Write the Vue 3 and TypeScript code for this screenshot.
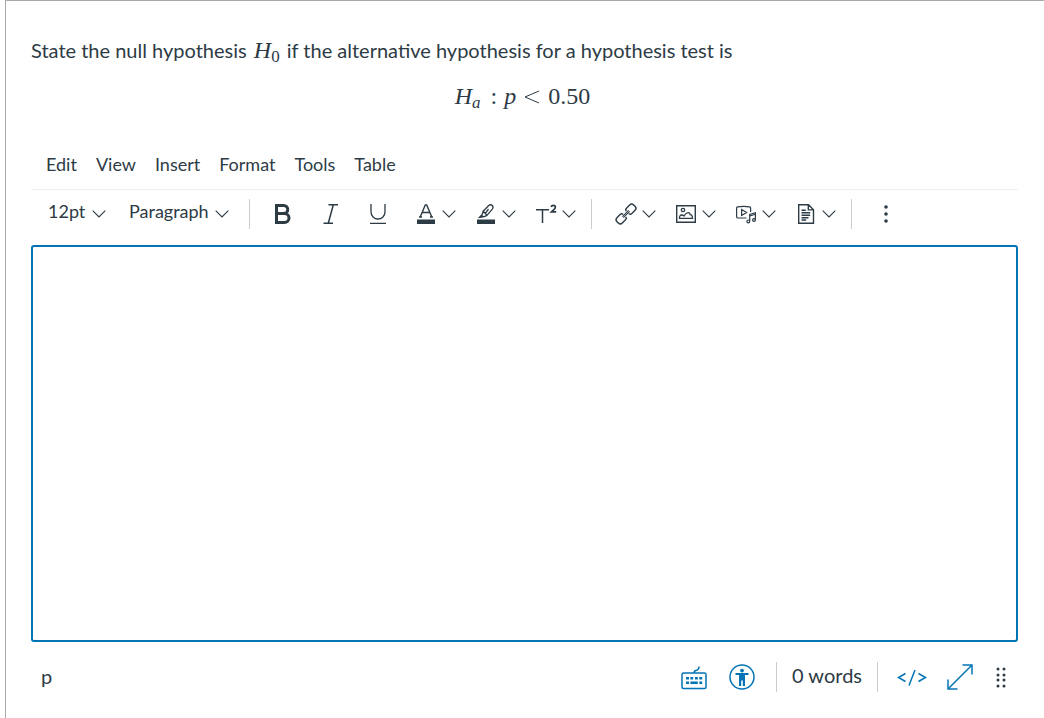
<script setup lang="ts">
import { ref } from 'vue'

const menus: string[] = ['Edit', 'View', 'Insert', 'Format', 'Tools', 'Table']
const fontSize = ref('12pt')
const block = ref('Paragraph')
const answer = ref('')
</script>

<template>
  <main class="question">
    <p class="prompt">
      State the null hypothesis
      <span class="math"><i>H</i><sub>0</sub></span>
      if the alternative hypothesis for a hypothesis test is
    </p>
    <p class="formula math">
      <span><i>H</i><sub><i>a</i></sub></span>
      <span class="colon">:</span>
      <i>p</i>
      <svg class="less" width="16" height="14" viewBox="0 0 16 14"><path d="M15 1L1 7l14 6" /></svg>
      <span>0.50</span>
    </p>

    <nav class="menubar" aria-label="Editor menu">
      <button v-for="m in menus" :key="m" type="button">{{ m }}</button>
    </nav>

    <div class="toolbar" role="toolbar" aria-label="Formatting">
      <label class="picker size">
        <select v-model="fontSize" aria-label="Font size">
          <option>12pt</option>
          <option>14pt</option>
        </select>
        <svg class="chev" width="14" height="8" viewBox="0 0 14 8"><path d="M.7.7L7 7 13.300.7" /></svg>
      </label>
      <label class="picker block">
        <select v-model="block" aria-label="Block style">
          <option>Paragraph</option>
          <option>Heading 2</option>
        </select>
        <svg class="chev" width="14" height="8" viewBox="0 0 14 8"><path d="M.7.7L7 7 13.300.7" /></svg>
      </label>

      <span class="rule"></span>
      <div class="group">
        <button class="single" type="button" aria-label="Bold">
          <svg width="20" height="20" viewBox="0 0 20 20">
            <path d="M3.500 1.500h7.200a4 4 0 0 1 0 8H3.500zM3.500 9.500h8a4.400 4.400 0 0 1 0 9h-8z" stroke-width="3" />
          </svg>
        </button>
        <button class="single" type="button" aria-label="Italic">
          <svg width="20" height="20" viewBox="0 0 20 20"><path d="M7.500.7H17M2.500 19.300H12M12.300.7L7.300 19.300" stroke-width="1.500" /></svg>
        </button>
        <button class="single" type="button" aria-label="Underline">
          <svg width="20" height="20" viewBox="0 0 20 20"><path d="M2 0v8a7 7 0 0 0 14 0V0M1 19.300h16" stroke-width="1.300" /></svg>
        </button>
      </div>
      <div class="group">
        <button class="split" type="button" aria-label="Text color">
          <svg width="20" height="20" viewBox="0 0 20 20">
            <path d="M4.200 13L9.300.9h1.400L15.800 13M6.300 8.500h7.400M3 13h3M14 13h3" stroke-width="1.400" />
            <path class="solid" d="M1 15.500h18v4.500H1z" />
          </svg>
          <svg class="chev" width="14" height="8" viewBox="0 0 14 8"><path d="M.7.7L7 7 13.300.7" /></svg>
        </button>
        <button class="split" type="button" aria-label="Highlight color">
          <svg width="20" height="20" viewBox="0 0 20 20">
            <path d="M7.200 7.300L12.700 1.500q2-1.600 3.600 0 1.500 1.700 0 3.600L11 11.300 7.200 7.300 6 10.800 3.600 13.200 8.400 12.500 11 11.300M12.500 5L9.300 9.300" stroke-width="1.300" />
            <path class="solid" d="M1 15.500h18v4.500H1zM3 13.700l2.800-3 2.200 2z" />
          </svg>
          <svg class="chev" width="14" height="8" viewBox="0 0 14 8"><path d="M.7.7L7 7 13.300.7" /></svg>
        </button>
        <button class="split" type="button" aria-label="Superscript">
          <svg width="20" height="20" viewBox="0 0 20 20">
            <path d="M0 5.700h13M6.500 5.700V19" stroke-width="1.500" />
            <path d="M15.200 3q.3-1.600 2.200-1.600 2 0 2 1.700 0 1.300-1.500 2.500L15.500 7.800h4.700" stroke-width="1.700" />
          </svg>
          <svg class="chev" width="14" height="8" viewBox="0 0 14 8"><path d="M.7.7L7 7 13.300.7" /></svg>
        </button>
      </div>

      <span class="rule"></span>
      <div class="group">
        <button class="split" type="button" aria-label="Links">
          <svg width="20" height="20" viewBox="0 0 20 20" stroke-width="1.400">
            <g transform="rotate(-45 10 10)">
              <path d="M7.600 8.300V8Q7.600 6.200 5.500 6.200H1Q-1.800 6.200-1.800 9v2Q-1.800 13.800 1 13.800h4.500q2.100 0 2.100-1.800v-.3" />
              <path d="M12.400 8.300V8q0-1.800 2.100-1.800H19q2.800 0 2.800 2.800v2q0 2.800-2.800 2.800h-4.500q-2.100 0-2.100-1.800v-.3" />
              <path d="M5.500 9.300h9M5.500 10.700h9" stroke-width="1" />
            </g>
          </svg>
          <svg class="chev" width="14" height="8" viewBox="0 0 14 8"><path d="M.7.7L7 7 13.300.7" /></svg>
        </button>
        <button class="split" type="button" aria-label="Images">
          <svg width="20" height="20" viewBox="0 0 20 20">
            <path d="M.7 1.700h18.600v16.600H.7z" stroke-width="1.400" />
            <circle cx="7" cy="6" r="1.700" stroke-width="1.300" />
            <path d="M3.500 14.300q-.2-3.300 2.300-3.300 1.500 0 2.200 1 2.300-3.700 4.500-3.300 1.500.3 1.700 2 2-.3 2.300 3.600z" stroke-width="1.300" />
          </svg>
          <svg class="chev" width="14" height="8" viewBox="0 0 14 8"><path d="M.7.7L7 7 13.300.7" /></svg>
        </button>
        <button class="split" type="button" aria-label="Record or upload media">
          <svg width="20" height="20" viewBox="0 0 20 20" stroke-width="1.200">
            <path d="M10.500 14H1.600Q.6 13.900.6 12.500V4q0-1 1-1.200 6-1 12 0 1 .2 1 1.200v4M5.600 5.500v6l5-3z" />
            <path d="M13.700 17V10.500l5.700-1.800v7M13.700 12l5.700-1.800" />
            <circle cx="12.300" cy="17.400" r="1.400" />
            <circle cx="18" cy="16" r="1.400" />
          </svg>
          <svg class="chev" width="14" height="8" viewBox="0 0 14 8"><path d="M.7.7L7 7 13.300.7" /></svg>
        </button>
        <button class="split" type="button" aria-label="Documents">
          <svg width="20" height="20" viewBox="0 0 20 20">
            <path d="M2.700.7h9.800l5 5v13.600H2.700zM12.300.7v5.200h5.200M5.500 6.200h4.300M5.500 8.800h8.700M5.500 11.300h8.700M5.500 13.700h7M5.500 16h4.700" stroke-width="1.400" />
          </svg>
          <svg class="chev" width="14" height="8" viewBox="0 0 14 8"><path d="M.7.7L7 7 13.300.7" /></svg>
        </button>
      </div>

      <span class="rule"></span>
      <button class="more" type="button" aria-label="More">
        <svg width="6" height="20" viewBox="0 0 6 20">
          <g class="solid"><circle cx="3" cy="3" r="1.800" /><circle cx="3" cy="10" r="1.800" /><circle cx="3" cy="17" r="1.800" /></g>
        </svg>
      </button>
    </div>

    <textarea v-model="answer" class="editor" aria-label="Rich content editor"></textarea>

    <footer class="status">
      <span class="path">p</span>
      <button class="blue" type="button" aria-label="Keyboard shortcuts">
        <svg width="26" height="26" viewBox="0 0 26 26">
          <rect x="1" y="9" width="24" height="15.500" rx="1.500" stroke-width="1.500" />
          <path d="M13 9q.2-2.500 2.500-2.800 2.500-.4 2.500-3.700" stroke-width="1.500" />
          <path class="solid" d="M5 13h3v2.600H5zM9.400 13h2.800v2.600H9.400zM14 13h2.800v2.600H14zM18.300 13h2.900v2.600h-2.900zM5 17.500h3v2.600H5zM9.400 17.500h7.400v2.600H9.400zM18.300 17.500h2.900v2.600h-2.900z" />
        </svg>
      </button>
      <button class="blue" type="button" aria-label="Accessibility checker">
        <svg width="26" height="26" viewBox="0 0 26 26">
          <circle cx="13" cy="13" r="12" stroke-width="1.500" />
          <circle class="solid" cx="13" cy="6.600" r="1.900" />
          <path class="solid" d="M6.500 9h13v2H16v11h-2.200v-5.500h-1.600V22H10V11H6.500z" />
        </svg>
      </button>
      <span class="rule"></span>
      <button class="words" type="button">0 words</button>
      <span class="rule"></span>
      <button class="blue" type="button" aria-label="HTML editor">
        <svg width="30" height="26" viewBox="0 0 30 26"><path d="M8.500 9.500l-7 4 7 4M21.500 9.500l7 4-7 4M18 6L12 21.500" stroke-width="1.500" /></svg>
      </button>
      <button class="blue" type="button" aria-label="Fullscreen">
        <svg width="26" height="26" viewBox="0 0 26 26"><path d="M1 25L25 1M15.500 1H25v9.500M1 15.500V25h9.500" stroke-width="1.500" /></svg>
      </button>
      <button class="grip" type="button" aria-label="Resize editor">
        <svg width="10" height="22" viewBox="0 0 10 22">
          <g class="solid">
            <template v-for="y in [3, 9, 14, 20]" :key="y">
              <circle cx="2" :cy="y" r="1.500" />
              <circle cx="8" :cy="y" r="1.500" />
            </template>
          </g>
        </svg>
      </button>
    </footer>
  </main>
</template>

<style>
body {
  margin: 0;
  background: #fff;
}
</style>

<style scoped>
.question {
  box-sizing: border-box;
  min-height: 100vh;
  margin-left: 5px;
  padding: 33px 26px 0 25px;
  border-top: 1px solid #aaa;
  border-left: 1px solid #aaa;
  display: flex;
  flex-direction: column;
  font-family: Lato, "Liberation Sans", sans-serif;
  font-size: 20px;
  color: #2d3b45;
}
p {
  margin: 0;
}
.prompt {
  line-height: 32px;
}
.math {
  font-family: "Liberation Serif", serif;
  font-size: 24px;
  line-height: 1;
}
.prompt .math {
  margin: 0 2px;
}
sub {
  font-size: 17px;
  line-height: 0;
  vertical-align: -4px;
}
.formula {
  display: flex;
  justify-content: center;
  align-items: baseline;
  gap: 8px;
  margin-top: 18px;
  padding-right: 4px;
}
.colon {
  padding-left: 2px;
  margin-right: -1px;
}
.less {
  margin-bottom: -1px;
}
button,
select {
  margin: 0;
  padding: 0;
  border: 0;
  background: none;
  font: inherit;
  color: inherit;
}
svg {
  display: block;
  flex: none;
  overflow: visible;
  fill: none;
  stroke: currentColor;
}
.solid {
  fill: currentColor;
  stroke: none;
}
.chev {
  stroke-width: 1.1;
}
.menubar {
  display: flex;
  gap: 19px;
  height: 46px;
  margin-top: 33px;
  padding: 0 0 2px 15px;
  border-bottom: 1px solid #eee;
  font-size: 18px;
}
.toolbar {
  display: flex;
  align-items: center;
  height: 48px;
  padding-bottom: 7px;
  font-size: 18px;
}
.picker {
  display: grid;
  grid-template-columns: 1fr 14px;
  align-items: center;
}
.picker select {
  grid-area: 1 / 1 / 2 / 3;
  appearance: none;
  line-height: 24px;
  padding-bottom: 6px;
}
.picker .chev {
  grid-area: 1 / 2;
  pointer-events: none;
}
.size {
  width: 58px;
  margin-left: 17px;
}
.block {
  width: 100px;
  margin: 0 20px 0 23px;
}
.rule {
  width: 1px;
  height: 30px;
  background: #c7cdd1;
}
.group {
  display: flex;
  margin: 0 5px 0 9px;
}
.group + .group {
  margin-left: -2px;
}
.rule + .group:has(.split) {
  margin-left: 14px;
}
.single {
  width: 48px;
  height: 36px;
  display: grid;
  place-items: center;
}
.split {
  width: 60px;
  height: 36px;
  display: flex;
  align-items: center;
  justify-content: center;
  gap: 6px;
}
.more {
  margin-left: 31px;
}
.editor {
  box-sizing: border-box;
  flex: 1;
  width: 100%;
  margin: 0;
  padding: 12px;
  border: 2px solid #0374b5;
  border-radius: 3px;
  outline: none;
  resize: none;
  font: inherit;
  color: inherit;
}
.status {
  display: flex;
  align-items: center;
  height: 70px;
  padding: 0 12px 6px 10px;
}
.path {
  margin-right: auto;
  padding-bottom: 2px;
}
.blue {
  color: #0374b5;
}
.blue + .blue {
  margin-left: 22px;
}
.blue + .rule {
  margin-left: 21px;
}
.words {
  margin: 0 15px;
  padding-bottom: 4px;
}
.rule + .blue {
  margin-left: 19px;
}
.blue + .blue:has(+ .grip) {
  margin: 0 23px 0 20px;
}
</style>
